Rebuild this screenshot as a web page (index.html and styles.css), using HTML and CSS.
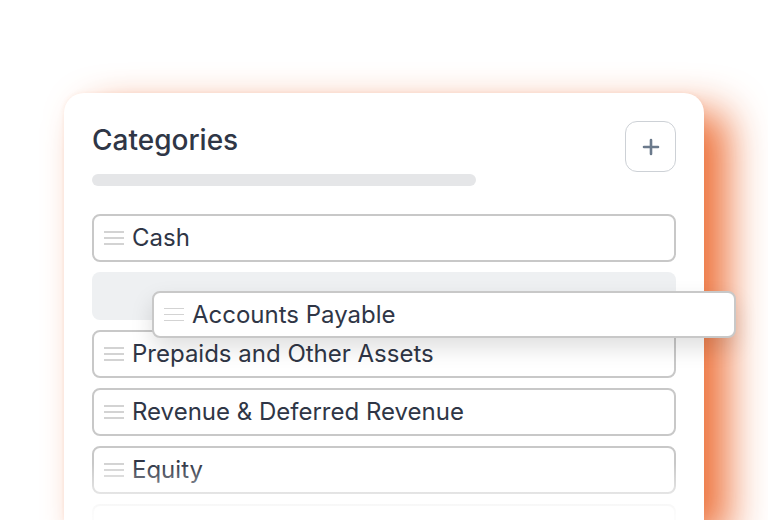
FILE: index.html
```html
<!DOCTYPE html>
<html>
<head>
<meta charset="utf-8">
<link rel="stylesheet" href="styles.css">
</head>
<body>
<div class="card">
  <div class="header">
    <div class="head-left">
      <h1 class="title">Categories</h1>
      <div class="bar"></div>
    </div>
    <button class="add" aria-label="Add">
      <svg width="18" height="18" viewBox="0 0 18 18"><path d="M9 2v14M2 9h14" stroke="#6b7a8c" stroke-width="2.6" stroke-linecap="round"/></svg>
    </button>
  </div>
  <div class="list">
    <div class="item"><span class="handle"><i></i><i></i><i></i></span><span class="label">Cash</span></div>
    <div class="slot">
      <div class="item dragging"><span class="handle"><i></i><i></i><i></i></span><span class="label">Accounts Payable</span></div>
    </div>
    <div class="item"><span class="handle"><i></i><i></i><i></i></span><span class="label">Prepaids and Other Assets</span></div>
    <div class="item"><span class="handle"><i></i><i></i><i></i></span><span class="label">Revenue &amp; Deferred Revenue</span></div>
    <div class="item"><span class="handle"><i></i><i></i><i></i></span><span class="label">Equity</span></div>
    <div class="item hidden-row"></div>
  </div>
  <div class="fade"></div>
</div>
</body>
</html>
```
FILE: styles.css
```css
html, body {
  margin: 0;
  padding: 0;
  background: #ffffff;
  overflow: hidden;
  height: 520px;
}
body {
  font-family: Inter, "Noto Sans", sans-serif;
  color: #2f3646;
}
.card {
  position: relative;
  margin: 93px 0 0 64px;
  width: 640px;
  height: 427px;
  overflow: visible;
  box-sizing: border-box;
  padding: 28px 28px 0 28px;
  background: #ffffff;
  border-radius: 20px 20px 0 0;
  box-shadow: 0 0 5px rgba(245, 140, 90, 0.14), 24px 18px 40px rgba(236, 106, 48, 0.95);
}
.header {
  display: flex;
  justify-content: space-between;
  align-items: flex-start;
}
.head-left {
  display: flex;
  flex-direction: column;
}
.title {
  margin: 2px 0 0 0;
  font-size: 28px;
  line-height: 34px;
  font-weight: 500;
  color: #2f3646;
}
.bar {
  margin-top: 17px;
  width: 384px;
  height: 12px;
  border-radius: 6px;
  background: #e5e6e8;
}
.add {
  width: 51px;
  height: 51px;
  box-sizing: border-box;
  border: 1.5px solid #cdd1d6;
  border-radius: 12px;
  background: #ffffff;
  display: flex;
  align-items: center;
  justify-content: center;
  padding: 0;
}
.list {
  margin-top: 28px;
  display: flex;
  flex-direction: column;
  gap: 10px;
}
.item {
  height: 48px;
  box-sizing: border-box;
  border: 2px solid #c8c8c8;
  border-radius: 8px;
  background: #ffffff;
  display: flex;
  align-items: center;
  padding-left: 10px;
}
.hidden-row {
  height: 16px;
  border-color: #e6e6e6;
  border-bottom: none;
  border-radius: 8px 8px 0 0;
}
.handle {
  display: flex;
  flex-direction: column;
  gap: 4.5px;
  width: 20px;
  margin-right: 8px;
}
.handle i {
  display: block;
  height: 1.5px;
  background: #d3d3d3;
}
.label {
  font-size: 24px;
  line-height: 28px;
  font-weight: 400;
  color: #2f3646;
}
.slot {
  position: relative;
  height: 48px;
  border-radius: 8px;
  background: #eef0f2;
}
.dragging {
  position: absolute;
  left: 60px;
  top: 19px;
  width: 584px;
  height: 47px;
  box-shadow: 0 10px 22px rgba(0, 0, 0, 0.13);
  z-index: 2;
}
.fade {
  position: absolute;
  left: 0;
  right: 0;
  top: 370px;
  height: 57px;
  background: linear-gradient(to bottom, rgba(255,255,255,0) 0, rgba(255,255,255,0.85) 50px, rgba(255,255,255,0.9) 57px);
  pointer-events: none;
}
```
